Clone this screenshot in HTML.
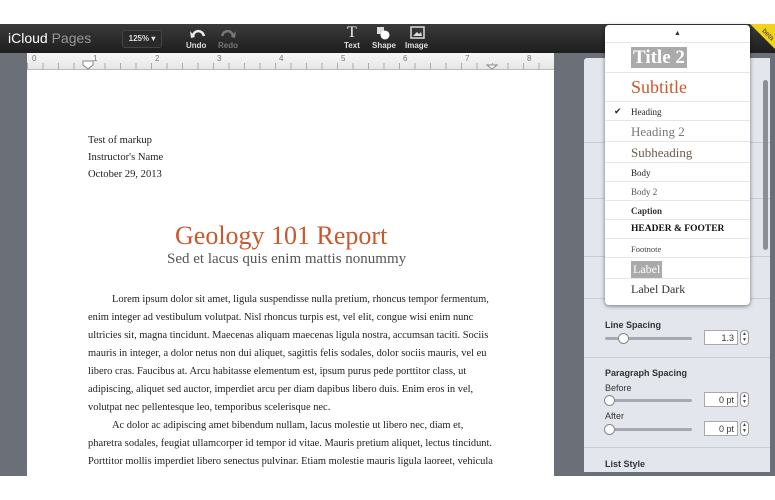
<!DOCTYPE html>
<html><head><meta charset="utf-8"><style>
*{margin:0;padding:0;box-sizing:border-box}
body{width:775px;height:500px;background:#fff;position:relative;overflow:hidden;font-family:"Liberation Sans",sans-serif}
.a{position:absolute}
#tb{left:0;top:24px;width:775px;height:29px;background:linear-gradient(#3a3a3a,#1e1e1e)}
.serif{font-family:"Liberation Serif",serif}
.tl{color:#ddd;font-size:10px;font-weight:bold;position:absolute;text-align:center}
#gray{left:0;top:53px;width:775px;height:423px;background:#6b6f77}
#ruler{left:27px;top:53px;width:527px;height:17px;background:linear-gradient(#f7f7f7,#e6e6e6);border-bottom:1px solid #bbb}
.rn{position:absolute;top:1px;font-size:8px;color:#777}
#page{left:27px;top:70px;width:527px;height:406px;background:#fff}
.doc{position:absolute;font-family:"Liberation Serif",serif;color:#222;font-size:10.6px;white-space:nowrap}
#panel{left:584px;top:58px;width:186px;height:414px;background:#e3e6ed;border-radius:3px 0 0 0}
.lab{position:absolute;font-size:9px;color:#333;font-weight:bold}
.sl{position:absolute;height:3px;background:#a6a9b0;border-radius:2px;width:87px}
.kn{position:absolute;width:11px;height:11px;border-radius:50%;background:#fff;border:1px solid #888}
.in{position:absolute;width:34px;height:15px;background:#fff;border:1px solid #aaa;font-size:9px;text-align:right;padding:2px 3px;color:#333}
.st{position:absolute;width:9px;height:15px;background:#fff;border:1px solid #999;border-radius:4px;font-size:5px;text-align:center;line-height:6px;color:#444}
.sep{position:absolute;left:0;width:186px;height:1px;background:#c9ccd3}
#dd{left:605px;top:25px;width:145px;height:280px;background:#fff;border-radius:4px;box-shadow:0 1px 4px rgba(0,0,0,.5)}
.r{position:absolute;left:0;width:145px;border-bottom:1px solid #e6e6e6;font-family:"Liberation Serif",serif;padding-left:26px;white-space:nowrap}
</style></head><body>
<div id="tb" class="a">
 <div class="a" style="left:8px;top:6px;font-size:14px;color:#fff">iCloud <span style="color:#999">Pages</span></div>
 <div class="a" style="left:122px;top:6px;width:40px;height:18px;border:1px solid #444;border-radius:3px;background:#2a2a2a;color:#ddd;font-size:8px;font-weight:bold;line-height:16px;text-align:center">125% ▾</div>
 <svg class="a" style="left:190px;top:3px" width="16" height="12"><path d="M3 9 C4 3 12 2 14 9" stroke="#eee" stroke-width="2.5" fill="none"/><path d="M0 4 L5 10 L1 11Z" fill="#eee"/></svg>
 <div class="tl" style="left:186px;top:17px;font-size:8px">Undo</div>
 <svg class="a" style="left:220px;top:3px" width="16" height="12"><path d="M13 9 C12 3 4 2 2 9" stroke="#777" stroke-width="2.5" fill="none"/><path d="M16 4 L11 10 L15 11Z" fill="#777"/></svg>
 <div class="tl" style="left:218px;top:17px;font-size:8px;color:#777">Redo</div>
 <div class="a serif" style="left:347px;top:0px;font-size:16px;color:#eee">T</div>
 <div class="tl" style="left:344px;top:17px;font-size:8px">Text</div>
 <svg class="a" style="left:376px;top:2px" width="14" height="14"><rect x="1" y="1" width="7" height="7" fill="#ddd"/><circle cx="9" cy="9" r="4.5" fill="#fff"/></svg>
 <div class="tl" style="left:372px;top:17px;font-size:8px">Shape</div>
 <svg class="a" style="left:410px;top:2px" width="15" height="13"><rect x="1" y="1" width="13" height="11" fill="none" stroke="#ddd" stroke-width="1.5"/><path d="M3 10 L7 6 L9 8 L11 6 L12 10Z" fill="#ddd"/></svg>
 <div class="tl" style="left:405px;top:17px;font-size:8px">Image</div>
</div>
<div id="gray" class="a"></div>
<div id="ruler" class="a">
 <div class="rn" style="left:5px">0</div><div class="rn" style="left:66px">1</div><div class="rn" style="left:128px">2</div><div class="rn" style="left:190px">3</div><div class="rn" style="left:252px">4</div><div class="rn" style="left:314px">5</div><div class="rn" style="left:376px">6</div><div class="rn" style="left:438px">7</div><div class="rn" style="left:500px">8</div>
 <div class="a" style="left:0;top:10px;width:527px;height:6px;background:repeating-linear-gradient(90deg,#aaa 0 1px,transparent 1px 15.5px)"></div>
 <svg class="a" style="left:55px;top:7px" width="12" height="10"><path d="M1 1H11V5L6 9L1 5Z" fill="#fff" stroke="#888"/></svg>
 <svg class="a" style="left:459px;top:11px" width="12" height="6"><path d="M1 1H11L6 5Z" fill="#fff" stroke="#888"/></svg>
</div>
<div id="page" class="a">
 <div class="doc" style="left:61px;top:65px">Test of markup</div>
 <div class="doc" style="left:61px;top:82px">Instructor's Name</div>
 <div class="doc" style="left:61px;top:99px">October 29, 2013</div>
 <div class="doc" style="left:148px;top:151px;font-size:26px;color:#c9582c">Geology 101 Report</div>
 <div class="doc" style="left:140px;top:181px;font-size:15px;color:#555">Sed et lacus quis enim mattis nonummy</div>
 <div style="position:absolute;left:61px;top:221px;line-height:18px;font-family:'Liberation Serif',serif;font-size:10.45px;color:#222;white-space:nowrap">
 <span style="padding-left:24px">Lorem ipsum dolor sit amet, ligula suspendisse nulla pretium, rhoncus tempor fermentum,</span><br>
 enim integer ad vestibulum volutpat. Nisl rhoncus turpis est, vel elit, congue wisi enim nunc<br>
 ultricies sit, magna tincidunt. Maecenas aliquam maecenas ligula nostra, accumsan taciti. Sociis<br>
 mauris in integer, a dolor netus non dui aliquet, sagittis felis sodales, dolor sociis mauris, vel eu<br>
 libero cras. Faucibus at. Arcu habitasse elementum est, ipsum purus pede porttitor class, ut<br>
 adipiscing, aliquet sed auctor, imperdiet arcu per diam dapibus libero duis. Enim eros in vel,<br>
 volutpat nec pellentesque leo, temporibus scelerisque nec.<br>
 <span style="padding-left:24px">Ac dolor ac adipiscing amet bibendum nullam, lacus molestie ut libero nec, diam et,</span><br>
 pharetra sodales, feugiat ullamcorper id tempor id vitae. Mauris pretium aliquet, lectus tincidunt.<br>
 Porttitor mollis imperdiet libero senectus pulvinar. Etiam molestie mauris ligula laoreet, vehicula
 </div>
</div>
<div id="panel" class="a">
 <div class="sep" style="top:84px"></div>
 <div class="sep" style="top:140px"></div>
 <div class="sep" style="top:198px"></div>
 <div class="sep" style="top:240px"></div>
 <div class="lab" style="left:21px;top:262px">Line Spacing</div>
 <div class="sl" style="left:21px;top:279px"></div><div class="kn" style="left:34px;top:275px"></div>
 <div class="in" style="left:120px;top:272px">1.3</div><div class="st" style="left:156px;top:272px">▲<br>▼</div>
 <div class="sep" style="top:299px"></div>
 <div class="lab" style="left:21px;top:310px">Paragraph Spacing</div>
 <div class="lab" style="left:21px;top:325px;font-weight:normal">Before</div>
 <div class="sl" style="left:21px;top:341px"></div><div class="kn" style="left:20px;top:337px"></div>
 <div class="in" style="left:120px;top:334px">0 pt</div><div class="st" style="left:156px;top:334px">▲<br>▼</div>
 <div class="lab" style="left:21px;top:353px;font-weight:normal">After</div>
 <div class="sl" style="left:21px;top:370px"></div><div class="kn" style="left:20px;top:366px"></div>
 <div class="in" style="left:120px;top:363px">0 pt</div><div class="st" style="left:156px;top:363px">▲<br>▼</div>
 <div class="sep" style="top:389px"></div>
 <div class="lab" style="left:21px;top:401px">List Style</div>
 <div class="a" style="left:179px;top:22px;width:5px;height:170px;background:#8a8e96;border-radius:3px"></div>
</div>
<svg class="a" style="left:750px;top:24px" width="25" height="25"><path d="M0 0H25V25Z" fill="#f2d21b"/><text x="12" y="9" font-size="7" font-family="Liberation Sans" fill="#333" transform="rotate(45 14 8)">beta</text></svg>
<div id="dd" class="a">
 <div class="r" style="top:0;height:18px;font-size:7px;text-align:center;padding:5px 0 0;color:#333;font-family:'Liberation Sans'">▲</div>
 <div class="r" style="top:18px;height:30px;padding-top:4px"><span style="background:#aaa;color:#fff;font-size:19px;font-weight:bold;padding:0 2px">Title 2</span></div>
 <div class="r" style="top:48px;height:29px;font-size:18px;color:#c9582c;padding-top:4px">Subtitle</div>
 <div class="r" style="top:77px;height:19px;font-size:9px;color:#222;padding-top:5px"><span style="position:absolute;left:9px;font-family:'DejaVu Sans';font-size:9px">✔</span>Heading</div>
 <div class="r" style="top:96px;height:21px;font-size:13px;color:#777;padding-top:3px">Heading 2</div>
 <div class="r" style="top:117px;height:21px;font-size:13px;color:#6b5a4e;padding-top:3px">Subheading</div>
 <div class="r" style="top:138px;height:19px;font-size:9px;color:#222;padding-top:5px">Body</div>
 <div class="r" style="top:157px;height:19px;font-size:9px;color:#555;padding-top:5px">Body 2</div>
 <div class="r" style="top:176px;height:19px;font-size:9px;color:#333;font-weight:bold;padding-top:5px">Caption</div>
 <div class="r" style="top:195px;height:19px;font-size:9.5px;color:#111;font-weight:bold;padding-top:4px">HEADER &amp; FOOTER</div>
 <div class="r" style="top:214px;height:19px;font-size:8.5px;color:#444;padding-top:5px">Footnote</div>
 <div class="r" style="top:233px;height:21px;padding-top:2px"><span style="background:#aaa;color:#fff;font-size:12px;padding:1px 2px 2px">Label</span></div>
 <div class="r" style="top:254px;height:21px;font-size:12px;color:#333;padding-top:3px;border:none">Label Dark</div>
</div>
</body></html>
